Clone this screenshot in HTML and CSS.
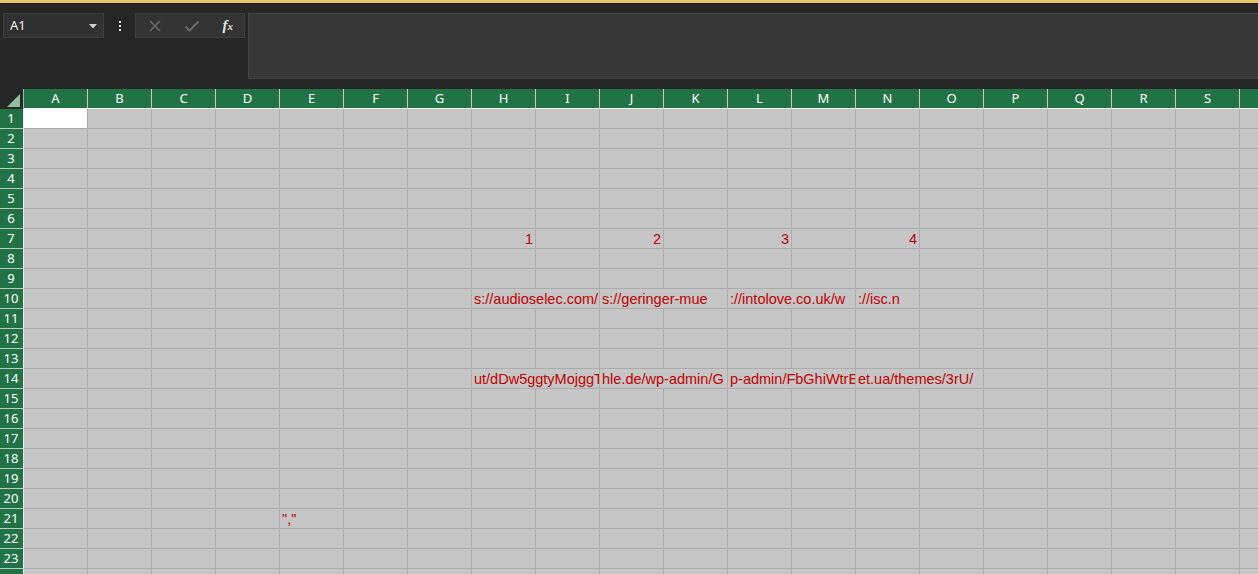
FILE: index.html
```html
<!DOCTYPE html>
<html lang="en">
<head>
<meta charset="utf-8">
<title>Sheet</title>
<link rel="stylesheet" href="styles.css">
</head>
<body>
<div class="app">
  <div class="accent"></div>
  <div class="toolbar">
    <div class="namebox">
      <span class="namebox-text">A1</span>
      <svg class="caret" width="8" height="5" viewBox="0 0 8 5"><path d="M0 0H8L4 4.5Z" fill="#d0d0d0"/></svg>
    </div>
    <div class="dots"><span></span><span></span><span></span></div>
    <div class="fx-box">
      <svg class="fx-icon" width="14" height="14" viewBox="0 0 14 14"><path d="M2 2L12 12M12 2L2 12" stroke="#6a6a6a" stroke-width="1.6" fill="none"/></svg>
      <svg class="fx-icon" width="16" height="14" viewBox="0 0 16 14"><path d="M1.5 7.5L5.5 11.5L14.5 2.5" stroke="#6a6a6a" stroke-width="2" fill="none"/></svg>
      <span class="fx-label"><i>f</i><span class="fx-x">x</span></span>
    </div>
    <div class="formula"></div>
  </div>
  <div class="sheet">
    <div class="corner"><svg width="14" height="13" viewBox="0 0 14 13"><path d="M13 0V13H0Z" fill="#8fbf9f"/></svg></div>
    <div class="colh">A</div><div class="colh">B</div><div class="colh">C</div><div class="colh">D</div>
    <div class="colh">E</div><div class="colh">F</div><div class="colh">G</div><div class="colh">H</div>
    <div class="colh">I</div><div class="colh">J</div><div class="colh">K</div><div class="colh">L</div>
    <div class="colh">M</div><div class="colh">N</div><div class="colh">O</div><div class="colh">P</div>
    <div class="colh">Q</div><div class="colh">R</div><div class="colh">S</div><div class="colh"></div>

    <div class="rowh r1">1</div><div class="rowh r2">2</div><div class="rowh r3">3</div><div class="rowh r4">4</div>
    <div class="rowh r5">5</div><div class="rowh r6">6</div><div class="rowh r7">7</div><div class="rowh r8">8</div>
    <div class="rowh r9">9</div><div class="rowh r10">10</div><div class="rowh r11">11</div><div class="rowh r12">12</div>
    <div class="rowh r13">13</div><div class="rowh r14">14</div><div class="rowh r15">15</div><div class="rowh r16">16</div>
    <div class="rowh r17">17</div><div class="rowh r18">18</div><div class="rowh r19">19</div><div class="rowh r20">20</div>
    <div class="rowh r21">21</div><div class="rowh r22">22</div><div class="rowh r23">23</div><div class="rowh r24"></div>

    <div class="cells"></div>

    <div class="cell selected r1 cA"></div>

    <div class="cell num r7 cH">1</div>
    <div class="cell num r7 cJ">2</div>
    <div class="cell num r7 cL">3</div>
    <div class="cell num r7 cN">4</div>

    <div class="cell txt r10 cH span2">s://audioselec.com/</div>
    <div class="cell txt r10 cJ span2">s://geringer-mue</div>
    <div class="cell txt r10 cL span2">://intolove.co.uk/w</div>
    <div class="cell txt r10 cN">://isc.n</div>

    <div class="cell txt r14 cH span2">ut/dDw5ggtyMojggT</div>
    <div class="cell txt r14 cJ span2">hle.de/wp-admin/G</div>
    <div class="cell txt r14 cL span2">p-admin/FbGhiWtrE</div>
    <div class="cell txt r14 cN span2">et.ua/themes/3rU/</div>

    <div class="cell txt r21 cE">","</div>
  </div>
</div>
</body>
</html>
```

FILE: styles.css
```css
* { box-sizing: border-box; }
html, body { margin: 0; padding: 0; }
body {
  width: 1258px;
  height: 574px;
  overflow: hidden;
  background: #262626;
  font-family: "Noto Sans", "Liberation Sans", sans-serif;
}
.app { width: 1258px; height: 574px; overflow: hidden; }
.accent { height: 3px; background: #ebc468; }

.toolbar {
  height: 86px;
  background: #262626;
  display: flex;
  align-items: flex-start;
  padding: 10px 0 0 3px;
}
.namebox {
  width: 101px;
  height: 25px;
  background: #313131;
  border: 1px solid #3f3f3f;
  display: flex;
  align-items: center;
  justify-content: space-between;
  padding: 0 6px 0 6px;
  color: #f2f2f2;
  font-size: 13px;
}
.namebox-text { line-height: 1; }
.caret { display: block; margin-top: 1px; }
.dots {
  width: 31px;
  height: 25px;
  display: flex;
  flex-direction: column;
  align-items: center;
  justify-content: center;
  gap: 2px;
}
.dots span { width: 2px; height: 2px; background: #e6e6e6; display: block; }
.fx-box {
  width: 110px;
  height: 25px;
  background: #333333;
  border: 1px solid #404040;
  display: flex;
  align-items: center;
  justify-content: space-between;
  padding: 0 11px 0 12px;
}
.fx-icon { display: block; }
.fx-label {
  color: #e8e8e8;
  font-family: "Liberation Serif", "DejaVu Serif", serif;
  font-size: 15px;
  line-height: 1;
  font-weight: bold;
}
.fx-x { font-style: italic; font-size: 11px; }
.formula {
  flex: 1;
  height: 66px;
  margin-left: 3px;
  background: #373737;
  border: 1px solid #454545;
  border-right: none;
}

.sheet {
  display: grid;
  grid-template-columns: 24px repeat(20, 64px);
  grid-template-rows: repeat(25, 20px);
  width: 1258px;
  overflow: hidden;
}
.corner {
  grid-row: 1;
  grid-column: 1;
  background: #262626;
  border-right: 1px solid #9fb8a8;
  display: flex;
  align-items: flex-end;
  justify-content: flex-end;
  padding: 0 2px 2px 0;
}
.corner svg { display: block; }
.colh {
  grid-row: 1;
  background: #217346;
  color: #ffffff;
  border-right: 1px solid #b9cfc1;
  border-bottom: 1px solid #f4f4f4;
  font-size: 13px;
  line-height: 19px;
  text-align: center;
}
.rowh {
  grid-column: 1;
  background: #217346;
  color: #ffffff;
  border-right: 1px solid #eeeeee;
  border-bottom: 1px solid #b9cfc1;
  font-size: 13px;
  line-height: 19px;
  text-align: center;
  padding-right: 1px;
}
.cells {
  grid-row: 2 / -1;
  grid-column: 2 / -1;
  background-color: #c6c6c6;
  background-image:
    linear-gradient(to right, transparent 63px, #ababab 63px),
    linear-gradient(to bottom, transparent 19px, #ababab 19px);
  background-size: 64px 100%, 100% 20px;
}
.cell {
  background: #c6c6c6;
  border-right: 1px solid #ababab;
  border-bottom: 1px solid #ababab;
  overflow: hidden;
  white-space: nowrap;
  font-family: "Liberation Sans", Arial, sans-serif;
  font-size: 14.5px;
  line-height: 21px;
  color: #c00000;
}
.selected { background: #ffffff; }
.txt { padding-left: 2px; }
.num { text-align: right; padding-right: 2px; }
.span2 { grid-column-end: span 2; }

.r1 { grid-row: 2; } .r2 { grid-row: 3; } .r3 { grid-row: 4; } .r4 { grid-row: 5; }
.r5 { grid-row: 6; } .r6 { grid-row: 7; } .r7 { grid-row: 8; } .r8 { grid-row: 9; }
.r9 { grid-row: 10; } .r10 { grid-row: 11; } .r11 { grid-row: 12; } .r12 { grid-row: 13; }
.r13 { grid-row: 14; } .r14 { grid-row: 15; } .r15 { grid-row: 16; } .r16 { grid-row: 17; }
.r17 { grid-row: 18; } .r18 { grid-row: 19; } .r19 { grid-row: 20; } .r20 { grid-row: 21; }
.r21 { grid-row: 22; } .r22 { grid-row: 23; } .r23 { grid-row: 24; } .r24 { grid-row: 25; }

.cA { grid-column-start: 2; }
.cE { grid-column-start: 6; }
.cH { grid-column-start: 9; }
.cJ { grid-column-start: 11; }
.cL { grid-column-start: 13; }
.cN { grid-column-start: 15; }
```
